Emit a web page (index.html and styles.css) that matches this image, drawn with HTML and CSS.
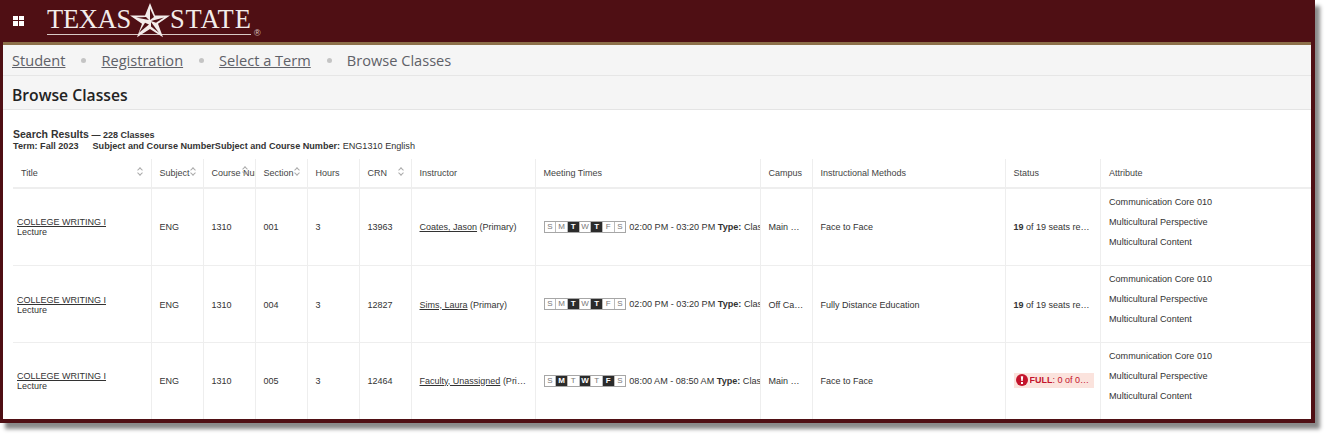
FILE: index.html
```html
<!DOCTYPE html>
<html lang="en">
<head>
<meta charset="utf-8">
<title>Browse Classes</title>
<link rel="stylesheet" href="styles.css">
</head>
<body>
<div class="window">
  <header class="topbar">
    <svg class="apps" viewBox="0 0 11 10" width="11" height="10"><path fill="#fff" d="M0 0h5v4H0zM6 0h5v4H6zM0 5h5v5H0zM6 5h5v5H6z"/></svg>
    <div class="logo">
      <div class="logo-words">
        <span class="word">TEXAS</span>
        <svg class="star" viewBox="0 0 40 40" width="40" height="36" preserveAspectRatio="none">
          <polygon fill="#f3ecea" points="20,0 25,14 40,14 28,23 33,38 20,29 7,38 12,23 0,14 15,14"/>
          <polygon fill="#4f0f14" points="20,6 20,19 24,15.500"/>
          <polygon fill="#4f0f14" points="34,16 21,20 26,22"/>
          <polygon fill="#4f0f14" points="29,33 21,21 21,26"/>
          <polygon fill="#4f0f14" points="9,33 19,24 15,22"/>
          <polygon fill="#4f0f14" points="6,16 19,19 16,15.500"/>
        </svg>
        <span class="word word-state">STATE</span>
      </div>
      <div class="logo-rule"></div>
      <span class="reg">®</span>
    </div>
  </header>
  <main class="page">
    <nav class="crumbs">
      <a href="#">Student</a><i></i><a href="#">Registration</a><i></i><a href="#">Select a Term</a><i></i><span>Browse Classes</span>
    </nav>
    <h1 class="title">Browse Classes</h1>
    <section class="results">
      <div class="summary">
        <div class="sum-line"><span class="sum-head">Search Results</span> <b>— 228 Classes</b></div>
        <div class="sum-line sum-term"><b>Term: Fall 2023</b><span><b>Subject and Course NumberSubject and Course Number:</b> ENG1310 English</span></div>
      </div>
      <table class="grid">
        <colgroup>
          <col class="c1"><col class="c3"><col class="c3"><col class="c3"><col class="c3"><col class="c3"><col class="c4"><col class="c5"><col class="c3"><col class="c6"><col class="c7"><col class="c8">
        </colgroup>
        <thead>
          <tr>
            <th class="first">Title<span class="sort sort-title"></span></th>
            <th>Subject<span class="sort"></span></th>
            <th>Course Number<span class="sort sort-course"></span></th>
            <th>Section<span class="sort"></span></th>
            <th>Hours</th>
            <th>CRN<span class="sort"></span></th>
            <th>Instructor</th>
            <th>Meeting Times</th>
            <th>Campus</th>
            <th>Instructional Methods</th>
            <th>Status</th>
            <th>Attribute</th>
          </tr>
        </thead>
        <tbody>
          <tr>
            <td class="first"><a href="#">COLLEGE WRITING I</a><br>Lecture</td>
            <td>ENG</td><td>1310</td><td>001</td><td>3</td><td>13963</td>
            <td><a href="#">Coates, Jason</a> (Primary)</td>
            <td class="meet"><span class="days"><i>S</i><i>M</i><i class="on">T</i><i>W</i><i class="on">T</i><i>F</i><i>S</i></span><span class="time">02:00 PM - 03:20 PM <b>Type:</b> Class</span></td>
            <td>Main Campus</td><td>Face to Face</td>
            <td><b>19</b> of 19 seats remain.</td>
            <td class="attrs"><p>Communication Core 010</p><p>Multicultural Perspective</p><p>Multicultural Content</p></td>
          </tr>
          <tr class="row-low">
            <td class="first"><a href="#">COLLEGE WRITING I</a><br>Lecture</td>
            <td>ENG</td><td>1310</td><td>004</td><td>3</td><td>12827</td>
            <td><a href="#">Sims, Laura</a> (Primary)</td>
            <td class="meet"><span class="days"><i>S</i><i>M</i><i class="on">T</i><i>W</i><i class="on">T</i><i>F</i><i>S</i></span><span class="time">02:00 PM - 03:20 PM <b>Type:</b> Class</span></td>
            <td>Off Campus</td><td>Fully Distance Education</td>
            <td><b>19</b> of 19 seats remain.</td>
            <td class="attrs"><p>Communication Core 010</p><p>Multicultural Perspective</p><p>Multicultural Content</p></td>
          </tr>
          <tr>
            <td class="first"><a href="#">COLLEGE WRITING I</a><br>Lecture</td>
            <td>ENG</td><td>1310</td><td>005</td><td>3</td><td>12464</td>
            <td><a href="#">Faculty, Unassigned</a> (Primary)</td>
            <td class="meet"><span class="days"><i>S</i><i class="on">M</i><i>T</i><i class="on">W</i><i>T</i><i class="on">F</i><i>S</i></span><span class="time">08:00 AM - 08:50 AM <b>Type:</b> Class</span></td>
            <td>Main Campus</td><td>Face to Face</td>
            <td class="status"><span class="full"><svg class="alert" viewBox="0 0 12 12" width="12" height="12"><circle cx="6" cy="6" r="6" fill="#c4142c"/><path fill="#fff" d="M4.800 2.200h2.400L6.700 7H5.300zM5 8h2v2H5z"/></svg><span class="full-text"><b>FULL</b>: 0 of 0 seats remain.</span></span></td>
            <td class="attrs"><p>Communication Core 010</p><p>Multicultural Perspective</p><p>Multicultural Content</p></td>
          </tr>
        </tbody>
      </table>
    </section>
  </main>
</div>
</body>
</html>
```
FILE: styles.css
```css
html, body {
  margin: 0;
  padding: 0;
  background: #fff;
  height: 100%;
  overflow: hidden;
}
body {
  font-family: "Liberation Sans", Arial, sans-serif;
  font-size: 9px;
  color: #333;
}
.window {
  width: 1315px;
  height: 423px;
  background: #4f0f14;
  box-shadow: 5px 6px 4px #8a8a8a;
  display: flex;
  flex-direction: column;
  overflow: hidden;
}
.topbar {
  flex: 0 0 42px;
  display: flex;
  align-items: flex-start;
  background: #4f0f14;
}
.apps {
  margin: 16px 0 0 13px;
}
.logo {
  position: relative;
  margin: 2px 0 0 23px;
  width: 204px;
}
.logo-words {
  display: flex;
  align-items: flex-start;
  font-family: "Liberation Serif", serif;
  color: #f3ecea;
  height: 32px;
}
.word {
  font-size: 26.500px;
  line-height: 32px;
  letter-spacing: -0.300px;
  margin-top: 1px;
}
.word-state {
  letter-spacing: 0.900px;
  margin-left: 1px;
}
.star {
  margin: 1px -1px 0 -1px;
  flex: none;
  position: relative;
  z-index: 1;
}
.logo-rule {
  height: 1px;
  background: #d9c9c6;
  margin-top: 0;
}
.reg {
  position: absolute;
  left: 207px;
  top: 26px;
  font-size: 9px;
  color: #d9c9c6;
}
.page {
  flex: 1;
  min-height: 0;
  margin: 0 4px 4px 3px;
  border-top: 3px solid #8d704a;
  background: #fff;
  overflow: hidden;
  display: flex;
  flex-direction: column;
}
.crumbs {
  flex: 0 0 31px;
  box-sizing: border-box;
  display: flex;
  align-items: center;
  padding: 0 0 1px 9px;
  background: #f5f5f5;
  border-bottom: 1px solid #e6e6e6;
  font-family: "Open Sans", sans-serif;
  font-size: 14.600px;
  color: #5f6168;
}
.crumbs a {
  color: #5f6168;
}
.crumbs i {
  width: 5px;
  height: 5px;
  border-radius: 50%;
  background: #c4c4c4;
  margin: 2px 15px 0 16px;
}
.title {
  flex: 0 0 34px;
  box-sizing: border-box;
  margin: 0;
  padding: 5px 0 0 9px;
  display: flex;
  align-items: center;
  background: #f5f5f5;
  border-bottom: 1px solid #e4e4e4;
  font-family: "Open Sans", sans-serif;
  font-size: 15.700px;
  font-weight: 600;
  color: #222;
}
.results {
  flex: 1;
  min-height: 0;
  padding: 19px 0 0 10px;
  overflow: hidden;
}
.summary {
  height: 30px;
  color: #333;
}
.sum-line {
  line-height: 10.500px;
}
.sum-head {
  font-size: 10.500px;
  font-weight: bold;
  color: #333;
}
.sum-term {
  display: flex;
  gap: 14px;
  font-size: 9.100px;
}
.grid {
  table-layout: fixed;
  border-collapse: collapse;
  width: 1298px;
}
.c1 { width: 138px; }
.c3 { width: 52px; }
.c4 { width: 124px; }
.c5 { width: 225px; }
.c6 { width: 193px; }
.c7 { width: 95px; }
.c8 { width: 211px; }
.grid th {
  position: relative;
  height: 29px;
  padding: 0 8px;
  box-sizing: border-box;
  text-align: left;
  font-weight: normal;
  font-size: 9px;
  color: #444;
  white-space: nowrap;
  overflow: hidden;
  border-right: 1px solid #eee;
  border-bottom: 2px solid #eee;
}
.grid td {
  height: 77px;
  padding: 0 8px;
  box-sizing: border-box;
  font-size: 9px;
  color: #333;
  white-space: nowrap;
  overflow: hidden;
  text-overflow: ellipsis;
  border-right: 1px solid #eee;
  border-bottom: 1px solid #eee;
}
.row-low td {
  padding-top: 2px;
}
.grid td.first {
  padding-left: 4px;
  line-height: 10px;
}
.grid tr > :last-child {
  border-right: 0;
  padding-left: 8.500px;
}
.grid a {
  color: #333;
}
.sort {
  position: absolute;
  top: 8px;
  left: 39px;
  width: 5px;
  height: 8px;
}
.sort::before, .sort::after {
  content: "";
  position: absolute;
  left: 0;
  width: 3px;
  height: 3px;
  border-left: 1px solid #aaa;
  border-top: 1px solid #aaa;
  transform: rotate(45deg);
}
.sort::before { top: 1px; }
.sort::after {
  top: 4px;
  transform: rotate(225deg);
}
.sort-title { left: 125px; }
.sort-course { top: 7px; }
.grid td.meet {
  padding: 0 0 0 8px;
  text-overflow: clip;
}
.meet > span {
  vertical-align: middle;
}
.days {
  display: inline-flex;
  border: 1px solid #a6a6a6;
  height: 10px;
  margin-right: 3px;
}
.days i {
  width: 10.700px;
  box-sizing: content-box;
  font-style: normal;
  font-size: 8px;
  line-height: 10px;
  text-align: center;
  color: #777;
  border-right: 1px solid #bbb;
}
.days i:last-child {
  border-right: 0;
}
.days i.on {
  background: #2b2b2b;
  color: #fff;
  font-weight: bold;
}
.time {
  color: #333;
  font-size: 9.100px;
}
.grid td.status {
  padding-right: 6px;
}
.full {
  display: inline-flex;
  align-items: center;
  box-sizing: border-box;
  width: 80px;
  height: 15px;
  padding-right: 2px;
  background: #fbe3dd;
  color: #c4142c;
}
.alert {
  margin: 0 2px 0 2px;
  flex: none;
}
.full-text {
  overflow: hidden;
  white-space: nowrap;
  text-overflow: ellipsis;
}
.attrs p {
  margin: 0;
  font-size: 9.100px;
  line-height: 20px;
}
.grid td.attrs {
  vertical-align: top;
  padding-top: 3px;
}
```
